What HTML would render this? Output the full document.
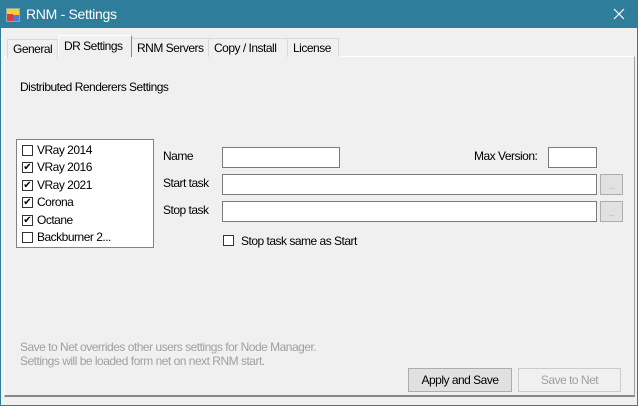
<!DOCTYPE html>
<html><head><style>
*{margin:0;padding:0;box-sizing:border-box}
body{width:638px;height:406px;background:#2e7d9b;position:relative;overflow:hidden;font-family:"Liberation Sans",sans-serif;font-size:12px;color:#000}
.a{position:absolute}
.win{left:1px;top:28px;width:636px;height:377px;background:#f0f0f0}
.t{white-space:nowrap;letter-spacing:-0.5px}
.tab{position:absolute;top:38px;height:19px;border:1px solid #d9d9d9;border-bottom:none;background:#f0f0f0;padding:2px 0 0 5px;white-space:nowrap;letter-spacing:-0.5px}
.inp{position:absolute;background:#fff;border:1px solid #7a7a7a}
.btn{position:absolute;border:1px solid #adadad;background:#e1e1e1;text-align:center;color:#aaa;font-size:10px;line-height:14px}
.cb{position:absolute;width:11px;height:11px;border:1px solid #333;background:#fff;font-size:10px;line-height:9px;text-align:center}
</style></head><body>
<div class="a" style="left:6px;top:8px;width:14px;height:14px;background:#ffcc33;border:1px solid #8aa"></div>
<div class="a" style="left:7px;top:14px;width:6px;height:7px;background:#d84040"></div>
<div class="a" style="left:13px;top:15px;width:6px;height:6px;background:#4a7bd8"></div>
<div class="a t" style="left:26px;top:6px;color:#fff;font-size:14px;letter-spacing:-0.3px">RNM - Settings</div>
<svg class="a" style="left:613px;top:8px" width="12" height="12"><path d="M1 1L11 11M11 1L1 11" stroke="#fff" stroke-width="1.2"/></svg>
<div class="a win"></div>
<div class="a" style="left:4px;top:56px;width:631px;height:341px;border:1px solid #fff;border-right-color:#a0a0a0;border-bottom:2px solid #888;background:#f0f0f0"></div>
<div class="tab" style="left:7px;width:51px;top:39px">General</div>
<div class="tab" style="left:131px;width:78px">RNM Servers</div>
<div class="tab" style="left:208px;width:80px">Copy / Install</div>
<div class="tab" style="left:287px;width:52px">License</div>
<div class="tab" style="left:58px;width:74px;top:35px;height:22px;border-color:#fff #888 transparent #fff;padding-top:3px">DR Settings</div>
<div class="a t" style="left:20px;top:80px">Distributed Renderers Settings</div>
<div class="a" style="left:16px;top:139px;width:138px;height:109px;background:#fff;border:1px solid #828282"></div>
<div class="cb" style="left:22px;top:145px"></div><div class="a t" style="left:37px;top:143px">VRay 2014</div>
<div class="cb" style="left:22px;top:162px">✔</div><div class="a t" style="left:37px;top:160px">VRay 2016</div>
<div class="cb" style="left:22px;top:180px">✔</div><div class="a t" style="left:37px;top:178px">VRay 2021</div>
<div class="cb" style="left:22px;top:197px">✔</div><div class="a t" style="left:37px;top:195px">Corona</div>
<div class="cb" style="left:22px;top:215px">✔</div><div class="a t" style="left:37px;top:213px">Octane</div>
<div class="cb" style="left:22px;top:232px"></div><div class="a t" style="left:37px;top:230px">Backburner 2...</div>
<div class="a t" style="left:163px;top:149px">Name</div>
<div class="a t" style="left:163px;top:176px">Start task</div>
<div class="a t" style="left:163px;top:203px">Stop task</div>
<div class="a t" style="left:474px;top:149px">Max Version:</div>
<div class="inp" style="left:222px;top:147px;width:118px;height:21px"></div>
<div class="inp" style="left:548px;top:147px;width:49px;height:21px"></div>
<div class="inp" style="left:222px;top:174px;width:375px;height:21px"></div>
<div class="inp" style="left:222px;top:201px;width:375px;height:21px"></div>
<div class="btn" style="left:600px;top:174px;width:23px;height:21px;line-height:24px">..</div>
<div class="btn" style="left:600px;top:201px;width:23px;height:21px;line-height:24px">..</div>
<div class="cb" style="left:223px;top:235px"></div>
<div class="a t" style="left:241px;top:234px">Stop task same as Start</div>
<div class="a t" style="left:20px;top:340px;color:#a0a0a0">Save to Net overrides other users settings for Node Manager.</div>
<div class="a t" style="left:20px;top:354px;color:#a0a0a0">Settings will be loaded form net on next RNM start.</div>
<div class="btn" style="left:408px;top:368px;width:104px;height:24px;color:#000;font-size:12px;line-height:22px;letter-spacing:-0.5px">Apply and Save</div>
<div class="btn" style="left:518px;top:368px;width:103px;height:24px;background:#f0f0f0;border-color:#ccc;color:#a0a0a0;font-size:12px;line-height:22px;letter-spacing:-0.5px">Save to Net</div>
</body></html>
